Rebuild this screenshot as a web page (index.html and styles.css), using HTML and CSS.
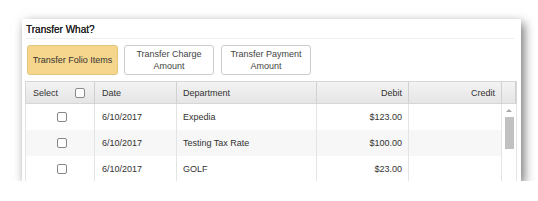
FILE: index.html
```html
<!DOCTYPE html>
<html lang="en">

<head>
    <meta charset="UTF-8" />
    <title>Transfer What?</title>
    <link rel="stylesheet" href="styles.css">
</head>

<body>
    <div class="panel">
        <div class="title">Transfer What?</div>

        <!-- transfer type buttons -->
        <div class="actions">
            <button class="btn active">Transfer Folio Items</button>
            <button class="btn">Transfer Charge<br />Amount</button>
            <button class="btn">Transfer Payment<br />Amount</button>
        </div>

        <!-- folio items grid -->
        <div class="grid">
            <div class="grid-head">
                <div class="cell c-select">Select <span class="chk"></span></div>
                <div class="cell c-date">Date</div>
                <div class="cell c-dept">Department</div>
                <div class="cell c-debit">Debit</div>
                <div class="cell c-credit">Credit</div>
                <div class="cell c-bar"></div>
            </div>
            <div class="grid-body">
                <div class="rows">
                    <div class="row">
                        <div class="cell c-select"><span class="chk"></span></div>
                        <div class="cell c-date">6/10/2017</div>
                        <div class="cell c-dept">Expedia</div>
                        <div class="cell c-debit">$123.00</div>
                        <div class="cell c-credit"></div>
                    </div>
                    <div class="row alt">
                        <div class="cell c-select"><span class="chk"></span></div>
                        <div class="cell c-date">6/10/2017</div>
                        <div class="cell c-dept">Testing Tax Rate</div>
                        <div class="cell c-debit">$100.00</div>
                        <div class="cell c-credit"></div>
                    </div>
                    <div class="row">
                        <div class="cell c-select"><span class="chk"></span></div>
                        <div class="cell c-date">6/10/2017</div>
                        <div class="cell c-dept">GOLF</div>
                        <div class="cell c-debit">$23.00</div>
                        <div class="cell c-credit"></div>
                    </div>
                </div>
                <div class="scrollbar">
                    <span class="arrow"></span>
                    <span class="thumb"></span>
                </div>
            </div>
        </div>
    </div>
</body>

</html>
```

FILE: styles.css
```css
* {
    margin: 0;
    padding: 0;
    box-sizing: border-box;
}

body {
    background: #fff;
    font-family: "Liberation Sans", Arial, sans-serif;
    color: #333;
}

.panel {
    margin: 19px 0 0 22px;
    width: 499px;
    height: 162px;
    background: #fff;
    overflow: hidden;
    box-shadow: 3px 4px 10px rgba(0, 0, 0, 0.55);
}

.title {
    margin: 0 7px 0 4px;
    height: 20px;
    padding-top: 5px;
    font-size: 10px;
    color: #222;
    text-shadow: 0 0 0.3px #222;
    border-bottom: 1px solid #eee;
}

.actions {
    display: flex;
    padding: 6px 0 0 5px;
}

.btn {
    width: 90px;
    height: 30px;
    margin-right: 7px;
    border: 1px solid #ccc;
    border-radius: 3px;
    background: #fff;
    font: 9px/12px "Liberation Sans", Arial, sans-serif;
    color: #444;
}

.btn.active {
    width: 91px;
    margin-right: 6px;
    background: #f6d68c;
    border-color: #e2c47a;
    color: #333;
}

.grid {
    margin: 6px 0 0 3px;
    width: 492px;
    font-size: 9px;
}

.grid-head {
    display: flex;
    height: 23px;
    background: linear-gradient(#f3f3f3, #e5e5e5);
    border: 1px solid #d6d6d6;
    border-left: 0;
}

.grid-head .cell {
    border-right: 1px solid #d0d0d0;
}

.cell {
    display: flex;
    align-items: center;
    padding: 0 6px;
    border-right: 1px solid #e4e4e4;
}

.c-select {
    width: 70px;
    padding-left: 7px;
    border-left: 1px solid #e4e4e4;
}

.grid-head .c-select {
    border-left: 1px solid #d6d6d6;
}

.c-select .chk {
    margin-left: auto;
    margin-right: 3px;
}

.row .c-select {
    justify-content: center;
}

.row .c-select .chk {
    margin: 0 0 0 2px;
}

.c-date {
    width: 82px;
    padding-left: 7px;
}

.c-dept {
    width: 140px;
}

.c-debit {
    width: 92px;
    justify-content: flex-end;
}

.c-credit {
    width: 93px;
    justify-content: flex-end;
}

.c-bar {
    flex: 1;
    border-right: 0;
}

.chk {
    display: inline-block;
    width: 10px;
    height: 10px;
    border: 1px solid #888;
    border-radius: 2px;
    background: #fff;
}

.grid-body {
    display: flex;
}

.rows {
    width: 477px;
}

.row {
    display: flex;
    height: 26px;
}

.row.alt {
    background: #f7f7f7;
}

.scrollbar {
    flex: 1;
    display: flex;
    flex-direction: column;
    align-items: center;
    background: #fff;
    border-right: 1px solid #e4e4e4;
    padding-top: 5px;
}

.arrow {
    width: 0;
    height: 0;
    border-left: 3px solid transparent;
    border-right: 3px solid transparent;
    border-bottom: 3px solid #a8a8a8;
}

.thumb {
    margin-top: 5px;
    width: 9px;
    height: 32px;
    background: #c1c1c1;
}
```
